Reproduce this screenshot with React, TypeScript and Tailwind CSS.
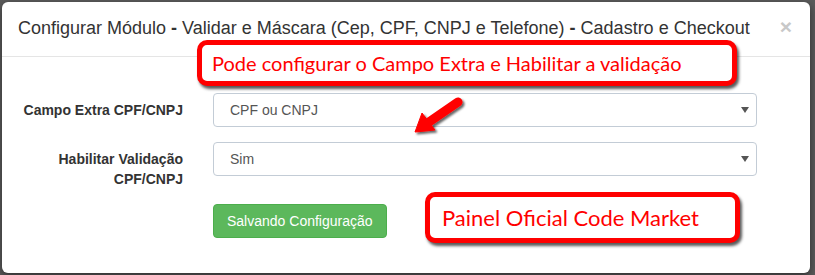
import React from 'react';

const sans = { fontFamily: '"Liberation Sans", Arial, sans-serif' };
const callout = { fontFamily: 'Lato, "Open Sans", sans-serif' };

interface SelectBoxProps {
  value: string;
}

function SelectBox({ value }: SelectBoxProps) {
  return (
    <div className="flex h-[34px] w-[544px] items-center justify-between rounded-[4px] border border-[#c3ccd6] bg-white pl-[16px] pr-[7px] text-[14px] text-[#555]">
      <span>{value}</span>
      <svg width="8" height="6" viewBox="0 0 8 6" className="text-[#555]">
        <path d="M0 0h8L4 6z" fill="currentColor" />
      </svg>
    </div>
  );
}

export default function App() {
  return (
    <div className="relative h-[275px] w-[815px] overflow-hidden bg-[#5b5b5b] pl-[2px] pt-[2px]" style={sans}>
      <div className="h-[271px] w-[808px] rounded-[6px] bg-white shadow-[0_3px_9px_rgba(0,0,0,0.5)]">
        {/* Header */}
        <div className="flex h-[55px] items-start justify-between border-b border-[#e5e5e5] pl-[16px] pr-[18px] pt-[13px]">
          <h4 className="text-[18px] leading-[26px] text-[#333]">
            Configurar Módulo <b>-</b> Validar e Máscara (Cep, CPF, CNPJ e Telefone) <b>-</b> Cadastro e Checkout
          </h4>
          <span className="mt-[1px] text-[21px] font-bold leading-[21px] text-[#c8c8c8]">×</span>
        </div>

        {/* Body */}
        <div className="flex flex-col pt-[36px]">
          <div className="flex items-start gap-[30px]">
            <label className="w-[181px] pt-[7px] text-right text-[14px] font-bold leading-[20px] text-[#333]">
              Campo Extra CPF/CNPJ
            </label>
            <SelectBox value="CPF ou CNPJ" />
          </div>
          <div className="mt-[15px] flex items-start gap-[30px]">
            <label className="w-[181px] pt-[7px] text-right text-[14px] font-bold leading-[20px] text-[#333]">
              Habilitar Validação
              <br />
              CPF/CNPJ
            </label>
            <SelectBox value="Sim" />
          </div>
          <div className="mt-[15px] pl-[211px]">
            <button className="h-[34px] rounded-[4px] border border-[#4cae4c] bg-[#5cb85c] px-[13px] text-[14px] text-white">
              Salvando Configuração
            </button>
          </div>
        </div>
      </div>

      {/* Annotations */}
      <div
        className="absolute left-[197px] top-[40px] flex h-[46px] w-[540px] items-center rounded-[10px] border-[5px] border-[#ff0000] bg-white pl-[10px] text-[20px] text-[#ff0000] shadow-[2px_3px_3px_rgba(0,0,0,0.65)]"
        style={callout}
      >
        Pode configurar o Campo Extra e Habilitar a validação
      </div>

      <svg className="absolute left-[405px] top-[92px]" width="62" height="50" viewBox="0 0 62 50">
        <defs>
          <filter id="arrowShadow" x="-20%" y="-20%" width="150%" height="150%">
            <feDropShadow dx="2" dy="2" stdDeviation="1.2" floodColor="#000" floodOpacity="0.6" />
          </filter>
        </defs>
        <g filter="url(#arrowShadow)" fill="#ff0000" stroke="#ff0000">
          <line x1="53" y1="10" x2="24" y2="30" strokeWidth="9" strokeLinecap="round" />
          <path d="M10 40 L17 21 L30 38 Z" strokeWidth="1" strokeLinejoin="round" />
        </g>
      </svg>

      <div
        className="absolute left-[425px] top-[192px] flex h-[51px] w-[315px] items-center rounded-[10px] border-[5px] border-[#ff0000] bg-white pl-[12px] text-[22px] text-[#ff0000] shadow-[2px_3px_3px_rgba(0,0,0,0.65)]"
        style={callout}
      >
        Painel Oficial Code Market
      </div>
    </div>
  );
}
